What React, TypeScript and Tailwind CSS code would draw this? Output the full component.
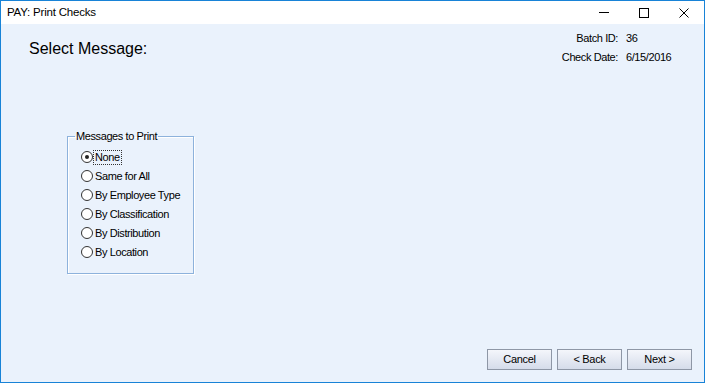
import React from "react";

const options = [
  "None",
  "Same for All",
  "By Employee Type",
  "By Classification",
  "By Distribution",
  "By Location",
];

const Radio = ({ checked }: { checked: boolean }) => (
  <span className="w-[12px] h-[12px] rounded-full border border-[#333] bg-white flex items-center justify-center shrink-0">
    {checked && <span className="w-[4px] h-[4px] rounded-full bg-[#222]" />}
  </span>
);

const Button = ({ label }: { label: string }) => (
  <button className="w-[65px] h-[21px] border border-[#8e97a6] bg-gradient-to-b from-[#f4f6fb] to-[#d5dcea] text-[11px] tracking-[-0.3px] text-black flex items-center justify-center">
    {label}
  </button>
);

export default function App() {
  return (
    <div
      className="w-[705px] h-[383px] border border-[#1883d7] flex flex-col bg-[#eaf2fc] text-black"
      style={{ fontFamily: '"Liberation Sans", Arial, sans-serif' }}
    >
      {/* Title bar */}
      <div className="h-[23px] bg-white flex items-center shrink-0">
        <span className="pl-[6px] text-[11.5px] tracking-[-0.2px] flex-1">PAY: Print Checks</span>
        <div className="flex h-full">
          <div className="w-[40px] h-full flex items-center justify-center">
            <span className="w-[10px] h-[1px] bg-black" />
          </div>
          <div className="w-[40px] h-full flex items-center justify-center">
            <span className="w-[10px] h-[10px] border border-black" />
          </div>
          <div className="w-[40px] h-full flex items-center justify-center">
            <svg width="10" height="10" viewBox="0 0 10 10">
              <path d="M0.5 0.5 L9.5 9.5 M9.5 0.5 L0.5 9.5" stroke="#000" strokeWidth="1" />
            </svg>
          </div>
        </div>
      </div>

      {/* Body */}
      <div className="flex-1 flex flex-col px-[28px]">
        <div className="flex justify-between">
          <h1 className="text-[16px] mt-[15px] leading-[20px]">Select Message:</h1>
          <div className="grid grid-cols-[auto_auto] gap-x-[8px] gap-y-[6px] text-[11px] tracking-[-0.4px] leading-[13px] mt-[8px] mr-[4px]">
            <span className="text-right">Batch ID:</span>
            <span className="w-[46px]">36</span>
            <span className="text-right">Check Date:</span>
            <span>6/15/2016</span>
          </div>
        </div>

        {/* Group box */}
        <fieldset className="mt-[64px] ml-[38px] w-[127px] h-[146px] border border-[#8db2dc] shadow-[inset_1px_1px_0_#fff,1px_1px_0_#fff] pl-[13px] pr-0 pt-0">
          <legend className="text-[11px] tracking-[-0.4px] px-[1px] -ml-[6px]">Messages to Print</legend>
          <div className="flex flex-col mt-[3px]">
            {options.map((o, i) => (
              <label key={o} className="h-[19px] flex items-center gap-[1px] text-[11px] tracking-[-0.4px] leading-[13px] whitespace-nowrap">
                <Radio checked={i === 0} />
                <span className={i === 0 ? "outline outline-1 outline-dotted outline-[#333] px-[1px]" : "px-[1px]"}>
                  {o}
                </span>
              </label>
            ))}
          </div>
        </fieldset>

        <div className="flex-1" />
        <div className="flex justify-end gap-[5px] mb-[12px] -mr-[16px]">
          <Button label="Cancel" />
          <Button label="< Back" />
          <Button label="Next >" />
        </div>
      </div>
    </div>
  );
}
